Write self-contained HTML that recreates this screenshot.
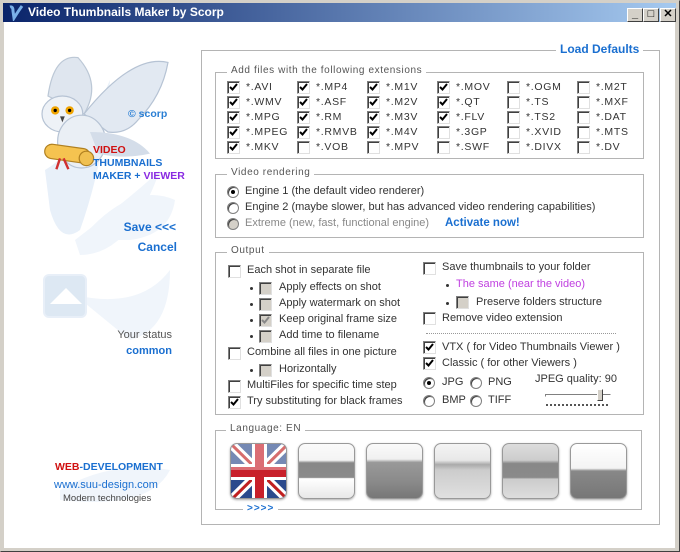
<!DOCTYPE html>
<html><head><meta charset="utf-8"><style>
*{margin:0;padding:0;box-sizing:border-box}
body{width:680px;height:552px;background:#d4d0c8;font-family:"Liberation Sans",sans-serif;font-size:11px;color:#333;position:relative;overflow:hidden}
.win{position:absolute;left:0;top:0;width:680px;height:552px;border:1px solid #404040;border-top-color:#d4d0c8;border-left-color:#d4d0c8}
.title{position:absolute;left:3px;top:3px;width:673px;height:19px;background:linear-gradient(90deg,#0a246a,#a6caf0)}
.title span{position:absolute;left:25px;top:2px;color:#fff;font-weight:bold;font-size:12px}
.client{position:absolute;left:4px;top:22px;width:671px;height:526px;background:#fff}
.tb{position:absolute;top:5px;width:16px;height:14px;background:#d4d0c8;border:1px solid;border-color:#fff #404040 #404040 #fff;font-size:11px;font-weight:bold;text-align:center;line-height:11px;color:#000}
.a{position:absolute;white-space:nowrap}
.box{position:absolute;border:1px solid #b4b4b4}
.leg{position:absolute;background:#fff;padding:0 4px;color:#555;font-size:10px;letter-spacing:.6px;white-space:nowrap}
.cb{position:absolute;width:13px;height:13px;background:#fff;border:1px solid;border-color:#808080 #e0e0e0 #e0e0e0 #808080;box-shadow:inset 1px 1px #404040}
.cb.d{background:#d4d0c8}
.cb svg{position:absolute;left:1px;top:1px}
.ext{position:absolute;font-size:10.5px;letter-spacing:.7px;color:#333;white-space:nowrap}
.rd{position:absolute;width:12px;height:12px;border-radius:50%;background:#fff;border:1px solid #808080;box-shadow:inset 1px 1px #404040}
.rd.on::after{content:"";position:absolute;left:3px;top:3px;width:4px;height:4px;border-radius:50%;background:#000}
.rd.d{background:#d4d0c8}
.bul{position:absolute;width:3px;height:3px;background:#333;border-radius:50%}
.flag{position:absolute;top:443px;width:57px;height:56px;border-radius:7px;border:1px solid #999;box-shadow:0 1px 2px #aaa;overflow:hidden}
</style></head><body>
<div class="win"></div>
<div class="title"><svg style="position:absolute;left:4px;top:1px" width="18" height="17"><path d="M3 3 Q6 2 6 7 L7 14 Q12 6 15 2" stroke="#7ab0e8" stroke-width="3" fill="none"/></svg><span>Video Thumbnails Maker by Scorp</span>
<div class="tb" style="left:624px">_</div><div class="tb" style="left:640px">□</div><div class="tb" style="left:657px">✕</div></div>
<div class="client"></div>

<svg class="a" style="left:20px;top:40px" width="180" height="480">
<path d="M25 130 Q60 110 90 40 Q85 120 60 190 Q40 205 30 170 Z" fill="#e8f0f9"/>
<path d="M55 200 Q120 150 140 130 Q110 215 60 215 Z" fill="#f0f5fb"/>
<path d="M60 200 Q110 140 155 160 Q150 195 110 200 Z" fill="#f0f5fb"/>
<path d="M55 255 Q120 270 150 230 Q150 290 110 300 Z" fill="#f0f5fb"/>
<path d="M40 450 Q90 420 150 430 Q130 470 40 460 Z" fill="#f0f5fb"/>
<g transform="translate(-8,8) scale(1.2)">
<path d="M30 40 Q35 5 55 8 Q75 30 60 55 Z" fill="#dfe6ef" stroke="#bcc8d6"/>
<path d="M60 55 Q100 5 130 12 Q125 40 105 60 Q95 72 80 70 Z" fill="#e2e9f2" stroke="#b6c3d4"/>
<ellipse cx="42" cy="55" rx="17" ry="15" fill="#eef2f7" stroke="#b6c3d4"/>
<ellipse cx="58" cy="78" rx="20" ry="22" fill="#eaeff5" stroke="#b6c3d4"/>
<path d="M65 70 Q100 70 115 88 Q92 93 72 88 Z" fill="#d4dde9"/>
<circle cx="36" cy="52" r="3.5" fill="#f0a400"/><circle cx="48" cy="52" r="3.5" fill="#f0a400"/>
<circle cx="36" cy="52" r="1.4" fill="#000"/><circle cx="48" cy="52" r="1.4" fill="#000"/>
<path d="M40 57 l2 5 l2-5z" fill="#444"/>
<rect x="27" y="82" width="38" height="12" rx="6" fill="#f5c350" stroke="#b08020" transform="rotate(8 46 89)"/>
<circle cx="62" cy="92" r="6" fill="#f0c050" stroke="#b08020"/>
<path d="M40 92 l-3 9 M43 92 l4 9" stroke="#d03030" stroke-width="2"/>
</g>
</svg>
<div class="a" style="left:128px;top:108px;color:#2a7fd4;font-weight:bold;font-size:10.5px">© scorp</div>
<div class="a" style="left:93px;top:144px;color:#d01010;font-weight:bold;font-size:10.5px;line-height:13px">VIDEO<br><span style="color:#1a6fd0">THUMBNAILS</span><br><span style="color:#1a6fd0">MAKER + </span><span style="color:#8a2be2">VIEWER</span></div>
<div class="a" style="right:504px;top:220px;color:#1a6fd0;font-weight:bold;font-size:12px">Save &lt;&lt;&lt;</div>
<div class="a" style="right:503px;top:240px;color:#1a6fd0;font-weight:bold;font-size:12px">Cancel</div>
<div class="a" style="left:43px;top:274px;width:44px;height:44px;border-radius:6px;background:#dde8f3;border:2px solid #e8eff8"><div style="position:absolute;left:5px;top:12px;width:0;height:0;border-left:16px solid transparent;border-right:16px solid transparent;border-bottom:16px solid #fff"></div></div>
<div class="a" style="right:508px;top:329px;color:#555;font-size:11px">Your status</div>
<div class="a" style="right:508px;top:345px;color:#1a6fd0;font-weight:bold;font-size:11px">common</div>
<div class="a" style="left:55px;top:461px;color:#1a6fd0;font-weight:bold;font-size:10.5px"><span style="color:#d01010">WEB</span>-DEVELOPMENT</div>
<div class="a" style="left:54px;top:479px;color:#1a6fd0;font-size:11px">www.suu-design.com</div>
<div class="a" style="left:63px;top:493px;color:#444;font-size:9.5px">Modern technologies</div>

<div class="box" style="left:201px;top:50px;width:459px;height:475px"></div>
<div class="leg" style="left:556px;top:42px;color:#1a6fd0;font-weight:bold;font-size:12px;letter-spacing:0">Load Defaults</div>

<div class="box" style="left:215px;top:72px;width:429px;height:87px"></div>
<div class="leg" style="left:227px;top:65px">Add files with the following extensions</div>

<div class="box" style="left:215px;top:174px;width:429px;height:64px"></div>
<div class="leg" style="left:227px;top:167px">Video rendering</div>

<div class="box" style="left:215px;top:252px;width:429px;height:163px"></div>
<div class="leg" style="left:227px;top:245px">Output</div>

<div class="box" style="left:215px;top:430px;width:427px;height:80px"></div>
<div class="leg" style="left:226px;top:423px">Language: EN</div>
<div class="leg" style="left:243px;top:503px;color:#1a6fd0;font-weight:bold;letter-spacing:1px">&gt;&gt;&gt;&gt;</div>

<div id="ext"></div>
<script>
var cols=[["AVI","WMV","MPG","MPEG","MKV"],["MP4","ASF","RM","RMVB","VOB"],["M1V","M2V","M3V","M4V","MPV"],["MOV","QT","FLV","3GP","SWF"],["OGM","TS","TS2","XVID","DIVX"],["M2T","MXF","DAT","MTS","DV"]];
var chk=[[1,1,1,1,1],[1,1,1,1,0],[1,1,1,1,0],[1,1,1,0,0],[0,0,0,0,0],[0,0,0,0,0]];
var ck='<svg width="9" height="9"><path d="M1 4l2.5 2.5L8 1" stroke="#000" stroke-width="2" fill="none"/></svg>';
var h='';
for(var c=0;c<6;c++)for(var r=0;r<5;r++){var x=227+c*70,y=81+r*15;
h+='<div class="cb" style="left:'+x+'px;top:'+y+'px">'+(chk[c][r]?ck:'')+'</div><div class="ext" style="left:'+(x+19)+'px;top:'+(y)+'px">*.'+cols[c][r]+'</div>';}
document.getElementById('ext').innerHTML=h;
</script>

<div class="rd on" style="left:227px;top:186px"></div><div class="a" style="left:245px;top:185px">Engine 1 (the default video renderer)</div>
<div class="rd" style="left:227px;top:202px"></div><div class="a" style="left:245px;top:201px">Engine 2 (maybe slower, but has advanced video rendering capabilities)</div>
<div class="rd d" style="left:227px;top:218px"></div><div class="a" style="left:245px;top:217px;color:#888">Extreme (new, fast, functional engine)</div>
<div class="a" style="left:445px;top:217px;color:#1a6fd0;font-weight:bold;font-size:11.5px">Activate now!</div>

<div class="cb" style="left:228px;top:265px"></div><div class="a" style="left:247px;top:264px">Each shot in separate file</div>
<div class="bul" style="left:250px;top:287px"></div><div class="cb d" style="left:259px;top:282px"></div><div class="a" style="left:279px;top:281px">Apply effects on shot</div>
<div class="bul" style="left:250px;top:303px"></div><div class="cb d" style="left:259px;top:298px"></div><div class="a" style="left:279px;top:297px">Apply watermark on shot</div>
<div class="bul" style="left:250px;top:319px"></div><div class="cb d" style="left:259px;top:314px"><svg width="9" height="9"><path d="M1 4l2.5 2.5L8 1" stroke="#888" stroke-width="2" fill="none"/></svg></div><div class="a" style="left:279px;top:313px">Keep original frame size</div>
<div class="bul" style="left:250px;top:335px"></div><div class="cb d" style="left:259px;top:330px"></div><div class="a" style="left:279px;top:329px">Add time to filename</div>
<div class="cb" style="left:228px;top:347px"></div><div class="a" style="left:247px;top:346px">Combine all files in one picture</div>
<div class="bul" style="left:250px;top:369px"></div><div class="cb d" style="left:259px;top:364px"></div><div class="a" style="left:279px;top:363px">Horizontally</div>
<div class="cb" style="left:228px;top:380px"></div><div class="a" style="left:247px;top:379px">MultiFiles for specific time step</div>
<div class="cb" style="left:228px;top:396px"><svg width="9" height="9"><path d="M1 4l2.5 2.5L8 1" stroke="#000" stroke-width="2" fill="none"/></svg></div><div class="a" style="left:247px;top:395px">Try substituting for black frames</div>

<div class="cb" style="left:423px;top:262px"></div><div class="a" style="left:442px;top:261px">Save thumbnails to your folder</div>
<div class="bul" style="left:446px;top:284px"></div><div class="a" style="left:456px;top:278px;color:#c040e0">The same (near the video)</div>
<div class="bul" style="left:446px;top:302px"></div><div class="cb d" style="left:456px;top:296px"></div><div class="a" style="left:476px;top:296px">Preserve folders structure</div>
<div class="cb" style="left:423px;top:312px"></div><div class="a" style="left:442px;top:312px">Remove video extension</div>
<div class="a" style="left:426px;top:333px;width:190px;border-top:1px dotted #999"></div>
<div class="cb" style="left:423px;top:341px"><svg width="9" height="9"><path d="M1 4l2.5 2.5L8 1" stroke="#000" stroke-width="2" fill="none"/></svg></div><div class="a" style="left:442px;top:341px">VTX ( for Video Thumbnails Viewer )</div>
<div class="cb" style="left:423px;top:357px"><svg width="9" height="9"><path d="M1 4l2.5 2.5L8 1" stroke="#000" stroke-width="2" fill="none"/></svg></div><div class="a" style="left:442px;top:357px">Classic ( for other Viewers )</div>
<div class="rd on" style="left:423px;top:377px"></div><div class="a" style="left:442px;top:376px">JPG</div>
<div class="rd" style="left:470px;top:377px"></div><div class="a" style="left:488px;top:376px">PNG</div>
<div class="rd" style="left:423px;top:395px"></div><div class="a" style="left:442px;top:394px">BMP</div>
<div class="rd" style="left:470px;top:395px"></div><div class="a" style="left:488px;top:394px">TIFF</div>
<div class="a" style="left:535px;top:373px">JPEG quality: 90</div>
<div class="a" style="left:545px;top:394px;width:66px;height:3px;border:1px solid;border-color:#808080 #fff #fff #808080"></div>
<div class="a" style="left:597px;top:389px;width:6px;height:12px;background:#d4d0c8;border:1px solid;border-color:#fff #404040 #404040 #fff"></div>
<div class="a" style="left:546px;top:404px;width:62px;border-top:2px dotted #555"></div>

<div class="flag" style="left:230px;background:#1e3a7a">
<svg width="57" height="56"><rect width="57" height="56" fill="#2b4a8c"/><path d="M0 0L57 56M57 0L0 56" stroke="#fff" stroke-width="9"/><path d="M0 0L57 56M57 0L0 56" stroke="#c02020" stroke-width="3"/><rect x="21" width="15" height="56" fill="#fff"/><rect y="20" width="57" height="16" fill="#fff"/><rect x="24" width="9" height="56" fill="#c8202a"/><rect y="23" width="57" height="10" fill="#c8202a"/><rect width="57" height="26" fill="#fff" opacity=".35"/></svg></div>
<div class="flag" style="left:298px;background:linear-gradient(#fafafa 0,#f4f4f4 30%,#888 35%,#8a8a8a 62%,#fff 64%,#e8e8e8 100%)"></div>
<div class="flag" style="left:366px;background:linear-gradient(#fafafa 0,#f0f0f0 28%,#999 34%,#8a8a8a 70%,#777 100%)"></div>
<div class="flag" style="left:434px;background:linear-gradient(#f4f4f4 0,#e8e8e8 30%,#aaa 38%,#ccc 48%,#e0e0e0 100%)"></div>
<div class="flag" style="left:502px;background:linear-gradient(#ddd 0,#ccc 30%,#888 36%,#8a8a8a 62%,#ccc 65%,#ddd 100%)"></div>
<div class="flag" style="left:570px;background:linear-gradient(#fff 0,#f4f4f4 45%,#888 50%,#777 100%)"></div>
</body></html>
